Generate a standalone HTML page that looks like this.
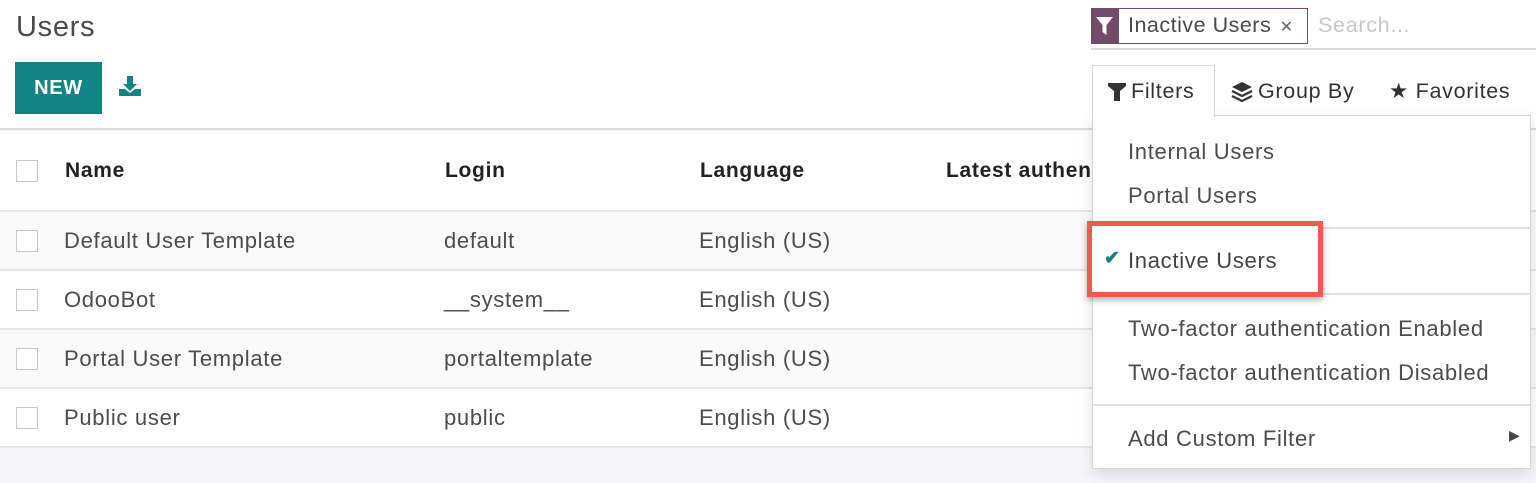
<!DOCTYPE html>
<html><head><meta charset="utf-8"><style>
*{box-sizing:border-box;margin:0;padding:0}
body{width:1536px;height:483px;overflow:hidden;background:#f7f7f9;font-family:"Liberation Sans",sans-serif;color:#4c4c4c;position:relative;letter-spacing:0.7px}
.abs{position:absolute}
.top{left:0;top:0;width:1536px;height:130px;background:#fff;border-bottom:2px solid #dcdcdc}
.table{left:0;top:131px;width:1536px;height:317px;background:#fff}
.row{position:absolute;left:0;width:1536px;border-bottom:2px solid #e6e6e6;font-size:22px}
.row span{position:absolute;top:50%;transform:translateY(-50%);white-space:nowrap}
.cb{position:absolute;left:16px;width:22px;height:22px;border:1.5px solid #c8c8c8;background:#fff;top:50%;transform:translateY(-50%)}
.hd{font-weight:bold;color:#222;font-size:21px}
.menu{left:1092px;top:115px;width:439px;height:354px;background:#fff;border:1.5px solid #d6d6d6;box-shadow:0 6px 14px rgba(0,0,0,.12);font-size:22px}
.menu div.t{position:absolute;left:35px;white-space:nowrap}
.sep{position:absolute;left:0;width:100%;height:1.5px;background:#e0e0e0}
</style></head><body>
<div class="abs top">
 <div class="abs" style="left:16px;top:11px;font-size:29px;color:#4a4a4a">Users</div>
 <div class="abs" style="left:15px;top:62px;width:87px;height:52px;background:#138484;color:#fff;font-weight:bold;font-size:20px;text-align:center;line-height:52px">NEW</div>
 <svg class="abs" style="left:119px;top:76px" width="22" height="20" viewBox="0 0 22 20"><path d="M8 0h6v8h4l-7 7-7-7h4z" fill="#138484"/><path d="M0 13h6l5 4 5-4h6v7H0z" fill="#138484"/></svg>
</div>
<div class="abs table">
 <div class="row" style="top:0;height:81px"><div class="cb"></div><span class="hd" style="left:65px">Name</span><span class="hd" style="left:445px">Login</span><span class="hd" style="left:700px">Language</span><span class="hd" style="left:946px">Latest authen</span></div>
 <div class="row" style="top:81px;height:59px;background:#fafafa"><div class="cb"></div><span style="left:64px">Default User Template</span><span style="left:444px">default</span><span style="left:699px">English (US)</span></div>
 <div class="row" style="top:140px;height:59px"><div class="cb"></div><span style="left:64px">OdooBot</span><span style="left:444px">__system__</span><span style="left:699px">English (US)</span></div>
 <div class="row" style="top:199px;height:59px;background:#fafafa"><div class="cb"></div><span style="left:64px">Portal User Template</span><span style="left:444px">portaltemplate</span><span style="left:699px">English (US)</span></div>
 <div class="row" style="top:258px;height:59px"><div class="cb"></div><span style="left:64px">Public user</span><span style="left:444px">public</span><span style="left:699px">English (US)</span></div>
</div>
<div class="abs" style="left:1086px;top:0;width:450px;height:116px;background:#fff"></div>
<div class="abs" style="left:1091px;top:8px;width:27px;height:36px;background:#714b67"></div>
<svg class="abs" style="left:1096px;top:17px" width="17" height="18" viewBox="0 0 17 18"><path d="M0 0h17l-6.5 8v10l-4-3V8z" fill="#fff"/></svg>
<div class="abs" style="left:1118px;top:8px;width:190px;height:36px;border:1.5px solid #714b67;font-size:21.5px;line-height:33px;padding-left:9px;color:#4a4a4a;white-space:nowrap;letter-spacing:0.5px">Inactive Users <span style="font-size:16px;color:#666;margin-left:2px">✕</span></div>
<div class="abs" style="left:1318px;top:13px;font-size:21.5px;color:#c8c8c8">Search...</div>
<div class="abs" style="left:1091px;top:48px;width:445px;height:2px;background:#dcdcdc"></div>
<div class="abs" style="left:1092px;top:65px;width:123px;height:52px;border:1.5px solid #d6d6d6;border-bottom:none;background:#fff;z-index:3"></div>
<svg class="abs" style="left:1108px;top:83px;z-index:4" width="18" height="18" viewBox="0 0 18 18"><path d="M0 0h18v3l-6 5v10h-6V8L0 3z" fill="#333"/></svg>
<div class="abs" style="left:1131px;top:79px;font-size:21.5px;color:#333;z-index:4">Filters</div>
<svg class="abs" style="left:1231px;top:81px" width="22" height="22" viewBox="0 0 22 22"><path d="M11 1L21 6 11 11 1 6z" fill="#333"/><path d="M1 10l10 5 10-5M1 15l10 5 10-5" stroke="#333" stroke-width="2.2" fill="none"/></svg>
<div class="abs" style="left:1258px;top:79px;font-size:21.5px;color:#333">Group By</div>
<div class="abs" style="left:1389px;top:79px;font-size:21.5px;color:#333">★ Favorites</div>
<div class="abs menu">
 <div class="t" style="top:23px">Internal Users</div>
 <div class="t" style="top:67px">Portal Users</div>
 <div class="sep" style="top:111px"></div>
 <div class="sep" style="top:177px"></div>
 <div class="t" style="top:200px">Two-factor authentication Enabled</div>
 <div class="t" style="top:244px">Two-factor authentication Disabled</div>
 <div class="sep" style="top:288px"></div>
 <div class="t" style="top:310px">Add Custom Filter</div>
 <div class="abs" style="left:416px;top:311px;font-size:14px;color:#444">▶</div>
</div>
<div class="abs" style="left:1087px;top:221px;width:236px;height:76px;border:5px solid #ef5b4c;background:#fff;box-shadow:0 3px 6px rgba(0,0,0,.3)"></div>
<div class="abs" style="left:1104px;top:247px;font-size:19px;color:#138484;font-weight:bold">✔</div>
<div class="abs" style="left:1128px;top:248px;font-size:22px;color:#444">Inactive Users</div>
</body></html>
